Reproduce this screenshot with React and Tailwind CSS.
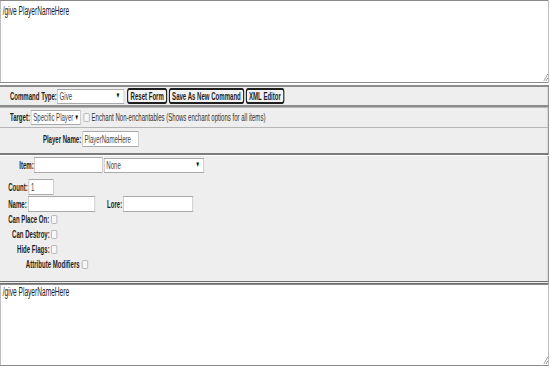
import React from 'react'

function Select({ className, value }) {
  return (
    <div className={"flex shrink-0 items-center justify-between whitespace-nowrap h-[15px] border border-[#a9a9a9] bg-white pl-[3px] pr-[7px] text-[#444] font-normal " + className}>
      <span>{value}</span>
      <span className="text-[8px] text-black ml-[2px]">▼</span>
    </div>
  )
}

function Field({ className, value }) {
  return (
    <div className={"flex shrink-0 items-center whitespace-nowrap h-[16px] border border-[#a9a9a9] bg-white px-[3px] text-[#444] font-normal " + className}>
      {value}
    </div>
  )
}

function Check({ className }) {
  return <span className={"inline-block shrink-0 w-[11px] h-[9px] border border-[#aaaaaa] rounded-[2px] bg-[#f6f6f6] " + className} />
}

function Btn({ className, children }) {
  return (
    <div className={"flex shrink-0 items-center whitespace-nowrap h-[16px] px-[4px] border-2 border-[#1e1e1e] rounded-[4px] bg-[#f3f3f3] font-bold text-[#1e1e1e] " + className}>
      {children}
    </div>
  )
}

export default function App() {
  return (
    <div className="w-[550px] h-[367px] overflow-hidden bg-white font-['Liberation_Sans',Arial,sans-serif] text-[11px] leading-none text-[#1e1e1e]">
      <div className="w-[998px] origin-top-left scale-x-[0.55]">
        {/* command output */}
        <textarea
          readOnly
          value="/give PlayerNameHere"
          className="block w-full h-[83px] border border-[#8a8a8a] bg-white px-[4px] pt-[3px] text-[12px] leading-[14px] text-[#222] outline-none"
        />
        <div className="h-[2px]" />

        {/* command type bar */}
        <div className="flex items-center h-[22px] border-y-2 border-[#8c8c8c] border-r-2 bg-[#eeeeee] pl-[18px] whitespace-nowrap">
          <span className="font-bold">Command Type:</span>
          <Select className="w-[122px] ml-[1px]" value="Give" />
          <Btn className="ml-[5px]">Reset Form</Btn>
          <Btn className="ml-[3px]">Save As New Command</Btn>
          <Btn className="ml-[3px]">XML Editor</Btn>
        </div>

        {/* target */}
        <div className="border-t border-[#b5b5b5] border-b-2 border-b-[#7c7c7c] border-r-2 border-r-[#8c8c8c] bg-[#eeeeee] whitespace-nowrap">
          <div className="flex items-center h-[19px] pl-[18px]">
            <span className="font-bold">Target:</span>
            <Select className="w-[91px] ml-[2px]" value="Specific Player" />
            <Check className="ml-[5px]" />
            <span className="ml-[3px] text-[#333]">Enchant Non-enchantables (Shows enchant options for all items)</span>
          </div>
          <div className="h-[1px] bg-[#b5b5b5]" />
          <div className="flex items-center h-[25px] pb-[3px] pl-[78px]">
            <span className="font-bold">Player Name:</span>
            <Field className="w-[102px] ml-[2px]" value="PlayerNameHere" />
          </div>
        </div>

        {/* item */}
        <div className="mt-[1px] pt-[1px] pb-[9px] border-b-[3px] border-double border-b-[#6f6f6f] border-r-2 border-r-[#8c8c8c] bg-[#eeeeee] whitespace-nowrap">
          <div className="flex items-center h-[16px] pl-[35px]">
            <span className="font-bold">Item:</span>
            <Field className="w-[125px] ml-[1px]" value="" />
            <Select className="w-[182px] ml-[2px]" value="None" />
          </div>
          <div className="flex items-center h-[16px] mt-[6px] pl-[15px]">
            <span className="font-bold">Count:</span>
            <Field className="w-[46px] ml-[2px]" value="1" />
          </div>
          <div className="flex items-center h-[16px] mt-[1px] pl-[15px]">
            <span className="font-bold">Name:</span>
            <Field className="w-[122px] ml-[2px]" value="" />
            <span className="font-bold ml-[22px]">Lore:</span>
            <Field className="w-[127px] ml-[2px]" value="" />
          </div>
          <div className="flex items-center h-[15px] pl-[15px]">
            <span className="font-bold">Can Place On:</span>
            <Check className="ml-[3px]" />
          </div>
          <div className="flex items-center h-[15px] pl-[22px]">
            <span className="font-bold">Can Destroy:</span>
            <Check className="ml-[3px]" />
          </div>
          <div className="flex items-center h-[15px] pl-[31px]">
            <span className="font-bold">Hide Flags:</span>
            <Check className="ml-[3px]" />
          </div>
          <div className="flex items-center h-[15px] pl-[47px]">
            <span className="font-bold">Attribute Modifiers</span>
            <Check className="ml-[4px]" />
          </div>
        </div>

        {/* bottom output */}
        <textarea
          readOnly
          value="/give PlayerNameHere"
          className="block w-full h-[82px] border border-[#8a8a8a] bg-white px-[4px] pt-0 text-[12px] leading-[14px] text-[#222] outline-none"
        />
      </div>
    </div>
  )
}
